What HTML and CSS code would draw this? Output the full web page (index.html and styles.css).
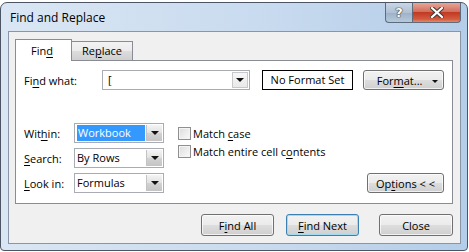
FILE: index.html
```html
<!DOCTYPE html>
<html lang="en">
<head>
    <meta charset="UTF-8">
    <title>Find and Replace</title>
    <link rel="stylesheet" href="styles.css">
</head>
<body>
<div class="window">
    <div class="titlebar">
        <span class="title">Find and Replace</span>
        <div class="caption-buttons">
            <span class="cap-btn help">?</span>
            <span class="cap-btn close">
                <svg width="14" height="11" viewBox="0 0 14 11">
                    <path d="M2 1 L12 10 M12 1 L2 10" stroke="#3b3b3b" stroke-width="4.2" stroke-linecap="square"/>
                    <path d="M2 1 L12 10 M12 1 L2 10" stroke="#ffffff" stroke-width="2.2" stroke-linecap="square"/>
                </svg>
            </span>
        </div>
    </div>
    <div class="client">
        <div class="tabs">
            <span class="tab active">Fin<u>d</u></span>
            <span class="tab">Re<u>p</u>lace</span>
        </div>
        <div class="panel">
            <div class="find-row">
                <label class="field-label find-label">Fi<u>n</u>d what:</label>
                <div class="combo find-combo">
                    <span class="combo-text">[</span>
                    <span class="drop flat"><span class="arrow"></span></span>
                </div>
                <div class="format-box">No Format Set</div>
                <button class="btn format-btn">For<u>m</u>at... <span class="arrow small"></span></button>
            </div>
            <div class="options">
                <div class="selects">
                    <div class="select-row">
                        <label class="field-label">Wit<u>h</u>in:</label>
                        <div class="combo">
                            <span class="combo-text"><span class="selected-text">Workbook</span></span>
                            <span class="drop"><span class="arrow"></span></span>
                        </div>
                    </div>
                    <div class="select-row">
                        <label class="field-label"><u>S</u>earch:</label>
                        <div class="combo">
                            <span class="combo-text">By Rows</span>
                            <span class="drop"><span class="arrow"></span></span>
                        </div>
                    </div>
                    <div class="select-row">
                        <label class="field-label"><u>L</u>ook in:</label>
                        <div class="combo">
                            <span class="combo-text">Formulas</span>
                            <span class="drop"><span class="arrow"></span></span>
                        </div>
                    </div>
                </div>
                <div class="checks">
                    <label class="check"><span class="box"></span><span>Match <u>c</u>ase</span></label>
                    <label class="check"><span class="box"></span><span>Match entire cell c<u>o</u>ntents</span></label>
                </div>
                <button class="btn options-btn">Op<u>t</u>ions &lt; &lt;</button>
            </div>
        </div>
        <div class="actions">
            <button class="btn action">F<u>i</u>nd All</button>
            <button class="btn action default"><u>F</u>ind Next</button>
            <button class="btn action close-btn">Close</button>
        </div>
    </div>
</div>
</body>
</html>
```

FILE: styles.css
```css
* {
    margin: 0;
    padding: 0;
    box-sizing: border-box;
}

body {
    background: #ffffff;
    font-family: "Open Sans", "Noto Sans", sans-serif;
    font-size: 11px;
    color: #000;
}

u {
    text-decoration: underline;
    text-underline-offset: 2px;
}

.window {
    width: 468px;
    height: 249px;
    margin-top: 2px;
    border: 1px solid #4b5563;
    border-radius: 7px 7px 4px 4px;
    background: linear-gradient(to right, #dae6f3, #c9dbef 55%, #b4cde8);
    display: flex;
    flex-direction: column;
    padding: 0 6px 6px 7px;
}

.titlebar {
    height: 28px;
    display: flex;
    align-items: flex-start;
}

.title {
    font-size: 12px;
    padding: 6px 0 0 2px;
    color: #000;
}

.caption-buttons {
    margin-left: auto;
    display: flex;
}

.cap-btn {
    height: 20px;
    display: flex;
    align-items: center;
    justify-content: center;
    border: 1px solid #5e6b7c;
    border-top: none;
}

.help {
    width: 27px;
    border-radius: 0 0 0 4px;
    border-right: none;
    background: linear-gradient(#c9d6e4, #b0c1d4 50%, #9cb1c8 51%, #b6c9dc);
    color: #fff;
    font-family: "DejaVu Sans", sans-serif;
    font-size: 13px;
    font-weight: bold;
    text-shadow: 0 0 1px #333, 0 0 1px #333, 0 0 1px #333;
}

.close {
    width: 49px;
    border-radius: 0 0 4px 0;
    background: linear-gradient(#e6a697, #d36f5c 45%, #c13a24 50%, #d25b3e 85%, #e28a6a);
}

.client {
    flex: 1;
    background: #f0f0f0;
    border: 1px solid #8896a8;
    padding: 7px 7px 7px 6px;
    display: flex;
    flex-direction: column;
}

.tabs {
    display: flex;
    align-items: flex-end;
}

.tab {
    height: 19px;
    padding: 1px 10px 0 10px;
    border: 1px solid #898c95;
    border-bottom: none;
    background: linear-gradient(#f3f3f3, #ebebeb 50%, #dddddd 51%, #cfcfcf);
    font-size: 11px;
}

.tab + .tab {
    border-left: none;
}

.tab.active {
    width: 57px;
    height: 22px;
    margin-bottom: -1px;
    padding: 3px 0 0 15px;
    background: #ffffff;
    position: relative;
}

.panel {
    background: #ffffff;
    border: 1px solid #898c95;
    padding: 9px 8px 10px 8px;
}

.find-row {
    display: flex;
    align-items: center;
    height: 20px;
}

.field-label {
    width: 50px;
    flex-shrink: 0;
}

.find-label {
    width: 78px;
}

.combo {
    width: 90px;
    height: 20px;
    border: 1px solid #a9acb3;
    background: #fff;
    display: flex;
}

.find-combo {
    width: 148px;
}

.combo-text {
    flex: 1;
    padding: 1px 0 0 2px;
    white-space: nowrap;
    overflow: hidden;
}

.find-combo .combo-text {
    padding-left: 5px;
}

.selected-text {
    display: inline-block;
    background: #3399ff;
    color: #fff;
    width: 70px;
    height: 16px;
    padding-left: 1px;
}

.drop {
    width: 16px;
    display: flex;
    align-items: center;
    justify-content: center;
    border-left: 1px solid #c3c3c3;
    background: linear-gradient(#f4f4f4, #e1e1e1 50%, #d2d2d2 51%, #c4c4c4);
    margin: 1px;
}

.drop.flat {
    background: linear-gradient(#f7f7f7, #e9e9e9);
    border: 1px solid #c8c8c8;
    margin: 1px 1px 1px 0;
}

.arrow {
    width: 0;
    height: 0;
    border-left: 4px solid transparent;
    border-right: 4px solid transparent;
    border-top: 4px solid #111;
}

.arrow.small {
    display: inline-block;
    border-left-width: 3px;
    border-right-width: 3px;
    border-top-width: 3px;
    margin-left: 7px;
    vertical-align: middle;
}

.format-box {
    width: 91px;
    height: 20px;
    margin-left: 12px;
    border: 1px solid #000;
    text-align: center;
    padding-top: 1px;
}

.btn {
    font-family: inherit;
    font-size: 11px;
    color: #000;
    height: 20px;
    border: 1px solid #707070;
    border-radius: 3px;
    background: linear-gradient(#f2f2f2, #ebebeb 50%, #dddddd 51%, #cfcfcf);
    box-shadow: inset 0 0 0 1px rgba(255, 255, 255, 0.7);
}

.format-btn {
    width: 81px;
    margin-left: auto;
    padding-left: 8px;
}

.options {
    display: flex;
    margin-top: 33px;
}

.selects {
    display: flex;
    flex-direction: column;
    gap: 5px;
}

.select-row {
    display: flex;
    align-items: center;
}

.checks {
    margin-left: 14px;
    padding-top: 1px;
    display: flex;
    flex-direction: column;
}

.check {
    height: 18px;
    display: flex;
    align-items: center;
}

.box {
    width: 13px;
    height: 13px;
    border: 1px solid #8e8f8f;
    background: linear-gradient(135deg, #dcdcdc, #fbfbfb);
    box-shadow: inset 0 0 0 1px #f4f4f4;
    margin-right: 2px;
}

.options-btn {
    width: 77px;
    margin-left: auto;
    align-self: flex-end;
}

.actions {
    display: flex;
    justify-content: flex-end;
    margin-top: 10px;
}

.action {
    width: 73px;
    height: 22px;
}

.action + .action {
    margin-left: 12px;
}

.action.close-btn {
    margin-left: 20px;
    width: 74px;
}

.default {
    border-color: #3c7fb1;
    box-shadow: inset 0 0 0 1px #9fdcf3;
}
```
